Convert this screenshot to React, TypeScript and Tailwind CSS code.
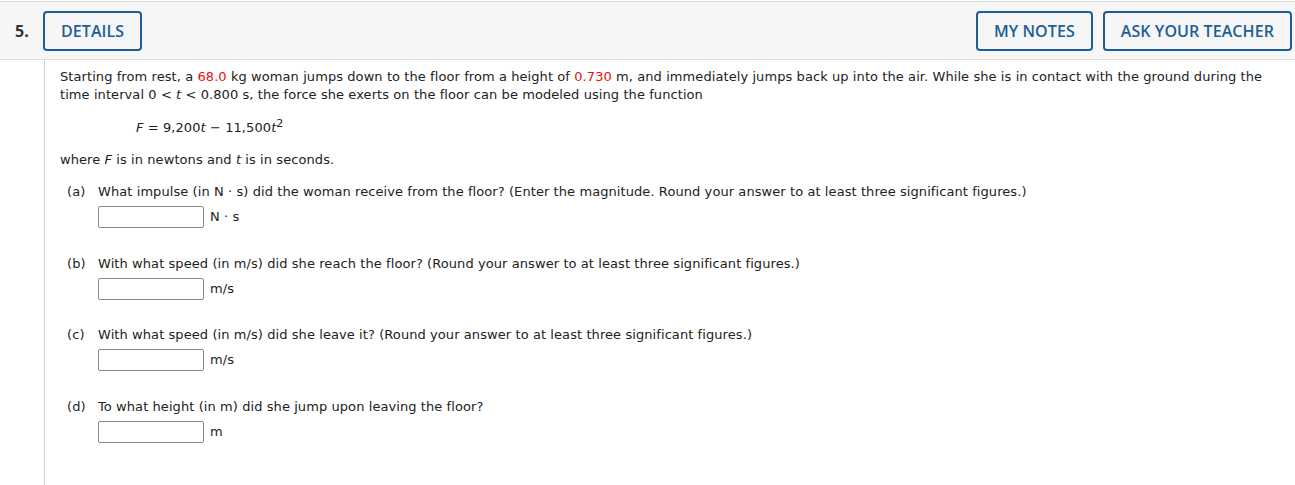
import React from "react";

const PARTS = [
  {
    label: "(a)",
    question:
      "What impulse (in N · s) did the woman receive from the floor? (Enter the magnitude. Round your answer to at least three significant figures.)",
    unit: "N · s",
  },
  {
    label: "(b)",
    question:
      "With what speed (in m/s) did she reach the floor? (Round your answer to at least three significant figures.)",
    unit: "m/s",
  },
  {
    label: "(c)",
    question:
      "With what speed (in m/s) did she leave it? (Round your answer to at least three significant figures.)",
    unit: "m/s",
  },
  {
    label: "(d)",
    question: "To what height (in m) did she jump upon leaving the floor?",
    unit: "m",
  },
];

function HeaderButton({ children }: { children: React.ReactNode }) {
  return (
    <button className="h-[40px] rounded-[4px] border-2 border-[#1c5f97] px-[16px] font-[family-name:'Open_Sans',sans-serif] text-[16px] font-semibold leading-none text-[#1c5f97]">
      {children}
    </button>
  );
}

export default function App() {
  return (
    <div className="min-h-[485px] w-[1295px] bg-white font-[family-name:'DejaVu_Sans',Verdana,sans-serif] text-[13px] tracking-[0.08px] text-[#222]">
      {/* Question header */}
      <div className="mt-[1px] flex h-[59px] items-center border-y border-[#dcdcdc] bg-[#f6f6f6] pr-[3px]">
        <span className="w-[43px] pl-[15px] font-[family-name:'Open_Sans',sans-serif] text-[16px] font-bold text-[#333]">
          5.
        </span>
        <HeaderButton>DETAILS</HeaderButton>
        <div className="ml-auto flex gap-[10px]">
          <HeaderButton>MY NOTES</HeaderButton>
          <HeaderButton>ASK YOUR TEACHER</HeaderButton>
        </div>
      </div>

      {/* Question body */}
      <div className="ml-[44px] min-h-[425px] border-l border-[#d0d0d0] pl-[15px] pr-[30px] pt-[8px] leading-[18px]">
        <p>
          Starting from rest, a <span className="text-[#e3120b]">68.0</span> kg woman jumps
          down to the floor from a height of <span className="text-[#e3120b]">0.730</span> m,
          and immediately jumps back up into the air. While she is in contact with the ground
          during the time interval 0 &lt; <i>t</i> &lt; 0.800 s, the force she exerts on the
          floor can be modeled using the function
        </p>
        <p className="mt-[15px] pl-[76px]">
          <i>F</i> = 9,200<i>t</i> − 11,500<i>t</i>
          <sup className="text-[11px]">2</sup>
        </p>
        <p className="mt-[14px]">
          where <i>F</i> is in newtons and <i>t</i> is in seconds.
        </p>

        <div className="mt-[14px] flex flex-col gap-[26.5px]">
          {PARTS.map((p) => (
            <div key={p.label} className="pl-[7px]">
              <div className="flex">
                <span className="w-[31px] shrink-0">{p.label}</span>
                <span>{p.question}</span>
              </div>
              <div className="ml-[31px] mt-[5px] flex items-center gap-[6px]">
                <input
                  type="text"
                  className="h-[22px] w-[106px] rounded-[2px] border border-[#8a8a8a] bg-white"
                />
                <span>{p.unit}</span>
              </div>
            </div>
          ))}
        </div>
      </div>
    </div>
  );
}
